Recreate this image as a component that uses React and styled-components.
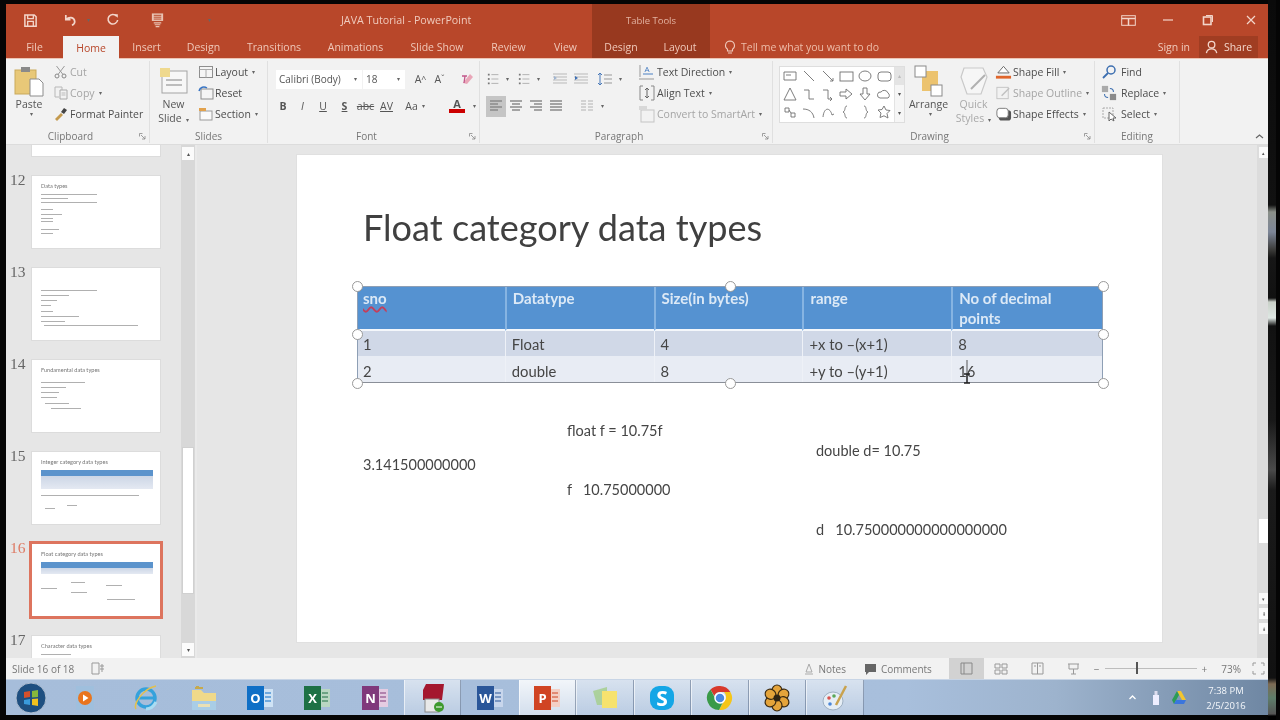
import React from 'react';
import styled, { createGlobalStyle } from 'styled-components';

const Global = createGlobalStyle`
  html, body { margin: 0; padding: 0; background: #000; }
  * { box-sizing: border-box; }
  #root { width: 1280px; height: 720px; overflow: hidden; }
`;

const Screen = styled.div`
  width: 1280px; height: 720px; background: #050505; display: flex;
  padding: 4px 0 5px 6px; font-family: "Open Sans", sans-serif; color: #4a4a4a;
  filter: blur(0.6px);
`;
const Window = styled.div`width: 1262px; display: flex; flex-direction: column;`;
const RightEdge = styled.div`
  width: 12px; margin-top: -4px; margin-bottom: -5px;
  background: linear-gradient(180deg, #0a0a0a 0, #111 205px, #8a8f88 212px, #7d8698 232px, #3a3a38 250px, #161616 258px, #111 298px, #c9d0c8 302px, #dfe8e4 318px, #111 326px, #181818 420px, #4a4a4a 470px, #1a1a1a 490px, #111 678px, #7d6a54 684px, #5e7d6a 698px, #555 714px, #000 716px);
  background-size: 8px 100%; background-repeat: no-repeat;
`;

const TitleBar = styled.div`height: 32px; background: #b8472a; display: flex; align-items: center; color: #f3d6cb; flex: none;`;
const Qat = styled.div`width: 586px; height: 100%; display: flex; align-items: center; padding-left: 15px;`;
const QatItem = styled.span`display: flex; width: ${p => p.$w}px; margin-left: ${p => p.$m || 0}px; justify-content: center; align-items: center;`;
const DocTitle = styled.span`font-size: 10.7px; margin-left: ${p => p.$m}px; white-space: nowrap; color: #f0cbbd;`;
const ContextHead = styled.div`width: 118px; height: 100%; background: #98391f; font-size: 9.5px; display: flex; align-items: center; justify-content: center; color: #e3b3a2;`;
const WinControls = styled.div`margin-left: auto; display: flex; align-items: center; height: 100%;`;
const WinBtn = styled.span`width: 40px; padding-left: ${p => p.$pl || 0}px; display: flex; justify-content: center; align-items: center;`;

const TabBar = styled.div`height: 23px; background: #b8472a; display: flex; align-items: stretch; font-size: 10.5px; color: #f0c9ba; flex: none; border-bottom: 1px solid #edc4b4;`;
const Tab = styled.div`
  width: ${p => p.$w}px; display: flex; justify-content: center; align-items: center;
  ${p => p.$active && 'background: #f2f2f2; color: #b8472a; margin-bottom: -1px;'}
  ${p => p.$ctx && 'background: #98391f;'}
`;
const TellMe = styled.div`display: flex; align-items: center; gap: 5px; margin-left: 14px; color: #eebda9; font-size: 10.5px; white-space: nowrap;`;
const SignIn = styled.div`margin-left: auto; display: flex; align-items: center; padding-right: 10px; gap: 9px; color: #f0cbbd;`;
const ShareBtn = styled.div`width: 59px; height: 22px; background: #a03d22; display: flex; align-items: center; justify-content: center; gap: 4px; color: #f3d6cb;`;

const Ribbon = styled.div`height: 86px; background: #f2f2f2; display: flex; flex: none; padding-top: 2px; border-bottom: 1px solid #dcdcdc;`;
const Group = styled.div`width: ${p => p.$w}px; display: flex; flex-direction: column; border-right: 1px solid #e0e0e0; position: relative; margin-bottom: 1px;`;
const GroupBody = styled.div`height: 65px; display: flex; flex: none;`;
const GroupLabel = styled.div`flex: 1; text-align: center; font-size: 10px; line-height: 15px; color: #777; padding: 3px ${p => p.$pr || 0}px 0 0;`;
const Launcher = styled.span`position: absolute; right: 3px; bottom: 3px; display: flex;`;
const BigBtn = styled.div`
  width: ${p => p.$w}px; display: flex; flex-direction: column; align-items: center; flex: none;
  font-size: 10.5px; line-height: 14px; padding-top: 4px; color: ${p => p.$off ? '#a9a9a9' : '#555'};
`;
const BigIcon = styled.div`height: 32px; display: flex; align-items: center; justify-content: center;`;
const SmallCol = styled.div`display: flex; flex-direction: column; flex: none; margin-left: ${p => p.$m || 0}px;`;
const SmallBtn = styled.div`
  height: 21px; display: flex; align-items: center; font-size: 10.5px; white-space: nowrap;
  color: ${p => p.$off ? '#a5a5a5' : '#4d4d4d'};
`;
const SmallIcon = styled.span`width: ${p => p.$w || 17}px; display: flex; justify-content: center; flex: none; margin-right: ${p => p.$gap ?? 1}px;`;
const Caret = styled.span`font-size: 6px; margin-left: 4px; color: #666; line-height: 1;`;
const Rows = styled.div`display: flex; flex-direction: column; padding-top: 8px; gap: 7px; flex: none;`;
const ToolRow = styled.div`display: flex; height: 20px; align-items: center; margin-left: ${p => p.$m || 0}px;`;
const SelectBox = styled.div`
  width: ${p => p.$w}px; height: 19px; background: #fff; margin-right: 1px; display: flex; align-items: center;
  justify-content: space-between; padding: 0 5px 0 3px; font-size: 10px; color: #555; white-space: nowrap; flex: none;
`;
const ToolBtn = styled.div`
  width: ${p => p.$w || 20}px; height: 21px; margin-left: ${p => p.$m || 0}px; display: flex; align-items: center; justify-content: center; flex: none;
  font-size: 10.5px; font-weight: ${p => p.$b ? 700 : 400}; font-style: ${p => p.$i ? 'italic' : 'normal'};
  text-decoration: ${p => p.$u ? 'underline' : 'none'}; color: #555;
  ${p => p.$on && 'background: #c5c5c5;'}
`;
const Gallery = styled.div`width: 126px; height: 57px; margin: 5px 0 0 6px; background: #fff; border: 1px solid #dedede; display: flex; flex: none;`;
const ShapeGrid = styled.div`flex: 1; display: grid; grid-template-columns: repeat(6, 1fr); grid-auto-rows: 18px; padding-left: 1px;`;
const ShapeCell = styled.span`display: flex; align-items: center; justify-content: center;`;
const GalleryScroll = styled.div`width: 10px; display: flex; flex-direction: column; background: #eee; border-left: 1px solid #e3e3e3;`;
const GalleryArrow = styled.span`flex: 1; display: flex; justify-content: center; align-items: center; font-size: 6px; color: ${p => p.$off ? '#bbb' : '#555'}; background: ${p => p.$off ? '#e4e4e4' : '#f6f6f6'};`;
const Collapse = styled.span`margin-left: auto; align-self: flex-end; margin-right: 4px; margin-bottom: 4px; display: flex;`;

const Main = styled.div`flex: 1; display: flex; background: #e6e6e6; min-height: 0;`;
const Panel = styled.div`width: 191px; display: flex; flex: none; border-right: 2px solid #eaeaea;`;
const ThumbList = styled.div`width: 175px; overflow: hidden;`;
const ThumbStack = styled.div`margin-top: -61px; display: flex; flex-direction: column;`;
const ThumbRow = styled.div`height: 92px; display: flex; flex: none; padding-left: 4px;`;
const ThumbNum = styled.div`width: 22px; font-family: "Liberation Serif", serif; font-size: 15.5px; line-height: 14px; margin-top: -3px; color: ${p => p.$sel ? '#de7a64' : '#666'}; flex: none;`;
const Thumb = styled.div`
  width: 128px; height: 72px; background: #fff; padding: 7px 9px 0; display: flex; flex-direction: column; flex: none; overflow: hidden;
  box-shadow: ${p => p.$sel ? '0 0 0 3px #dd745e' : '0 0 0 1px #dcdcdc'};
`;
const ThumbTitle = styled.div`font-size: 5.6px; line-height: 6px; color: #777; white-space: nowrap; font-family: Lato, sans-serif;`;
const ThumbLine = styled.div`height: 1px; width: ${p => p.$w}px; background: ${p => p.$c || '#b0b0b0'}; margin-top: ${p => p.$t}px; margin-left: ${p => p.$l || 0}px; flex: none;`;
const ThumbTable = styled.div`
  width: 112px; height: ${p => p.$h}px; margin: 5px 0 0 0; flex: none;
  background: linear-gradient(180deg, #5b93cc 0, #5b93cc 6px, #ccd6e6 6px, #e4e9f2 100%);
`;
const MiniRow = styled.div`display: flex; flex: none;`;

const PanelTrack = styled.div`width: 14px; background: #d8d8d8; display: flex; flex-direction: column; padding: 2px 1px; flex: none;`;
const ScrollBtn = styled.div`height: 13px; background: #fbfbfb; display: flex; align-items: center; justify-content: center; font-size: 6px; color: #555; flex: none; margin-top: ${p => p.$push ? 'auto' : '0'};`;
const ScrollThumb = styled.div`height: 147px; background: #fff; margin-top: ${p => p.$t}px; flex: none; border: 1px solid #d0d0d0;`;

const Canvas = styled.div`flex: 1; padding: 10px 0 0 100px; min-width: 0;`;
const Slide = styled.div`width: 865px; height: 487px; background: #fff; position: relative; padding-top: 50px; box-shadow: 0 0 0 1px #e0e0e0; font-family: Lato, sans-serif; color: #444;`;
const SlideTitle = styled.h1`margin: 0 0 0 66px; font-weight: 400; font-size: 36.1px; line-height: 44px; color: #404040; white-space: nowrap;`;
const TableWrap = styled.div`margin: 37px 0 0 60px; width: 746px; position: relative;`;
const DataTable = styled.div`
  display: grid; grid-template-columns: repeat(5, 1fr); grid-template-rows: 44px 25px 26px;
  border: 1px solid #8e9fb5; border-bottom-color: #8a8f98; background: #eef2f8;
`;
const HeadCell = styled.div`
  background: #5592d1; color: #dce9f6; font-weight: 700; font-size: 15px; line-height: 20px;
  padding: 1px 30px 0 ${p => p.$first ? 5 : 6}px; margin-left: ${p => p.$first ? 0 : -2}px;
  border-left: ${p => p.$first ? 'none' : '2px solid #86b4e2'}; border-bottom: 2px solid #f4f7fb;
`;
const BodyCell = styled.div`
  background: ${p => p.$odd ? '#d0d8e7' : '#e8ecf4'}; font-size: 14.8px; line-height: 20px;
  padding: ${p => p.$odd ? 3 : 5}px 6px 0 ${p => p.$first ? 5 : 6}px; margin-left: ${p => p.$first ? 0 : -2}px;
  border-left: ${p => p.$first ? 'none' : '1px solid #eef1f7'}; color: #454545; white-space: nowrap;
`;
const Squiggle = styled.span`text-decoration: underline wavy #c23f5c 1.5px; text-decoration-skip-ink: none; text-underline-offset: 2px;`;
const Handle = styled.span`position: absolute; width: 11px; height: 11px; border-radius: 50%; background: #fff; border: 1.5px solid #999; left: ${p => p.$x}px; top: ${p => p.$y}px; margin: -5.5px 0 0 -5.5px;`;
const Cursor = styled.svg`position: absolute; left: 604px; top: 73px;`;
const Loose = styled.div`position: absolute; left: ${p => p.$x}px; top: ${p => p.$y}px; font-size: 14.5px; line-height: 20px; white-space: pre; color: #454545;`;

const MainScroll = styled.div`width: 11px; background: #dcdcdc; display: flex; flex-direction: column; padding-top: 2px; margin-left: auto; flex: none; align-items: flex-end;`;
const MainBtn = styled.div`width: 9px; height: 11px; background: #fafafa; display: flex; align-items: center; justify-content: center; font-size: 5px; color: #555; flex: none; margin-top: ${p => p.$t || 0}px;`;
const MainThumb = styled.div`width: 9px; height: 24px; background: #fff; margin-top: 361px; flex: none;`;

const StatusBar = styled.div`height: 21px; background: #f2f2f2; display: flex; align-items: center; font-size: 10px; color: #777; flex: none; padding-left: 6px;`;
const StatusRight = styled.div`margin-left: auto; display: flex; align-items: center; height: 100%;`;
const StatusItem = styled.span`display: flex; align-items: center; gap: 4px; margin-left: ${p => p.$m || 0}px; white-space: nowrap;`;
const ViewBtn = styled.span`width: 35px; height: 100%; display: flex; align-items: center; justify-content: center; margin-left: ${p => p.$m || 0}px; ${p => p.$on && 'background: #d2d2d2;'}`;
const ZoomTrack = styled.span`width: 92px; height: 1px; background: #bdbdbd; position: relative; margin: 0 5px; display: block;`;
const ZoomKnob = styled.span`position: absolute; left: 31px; top: -6px; width: 2px; height: 12px; background: #555;`;

const Taskbar = styled.div`height: 36px; display: flex; align-items: stretch; flex: none; background: linear-gradient(90deg, #a6bdda 0, #a8bfdc 900px, #9db3cd 1050px, #6f87a3 1262px); border-top: 1px solid #c8d5e6;`;
const Start = styled.div`width: 49px; display: flex; align-items: center; justify-content: center; flex: none;`;
const TaskIcon = styled.div`
  width: ${p => p.$w || 57.5}px; display: flex; align-items: center; justify-content: center; flex: none;
  ${p => p.$open && `background: linear-gradient(180deg, rgba(255,255,255,.55), rgba(255,255,255,.22)); box-shadow: inset 1px 0 0 rgba(255,255,255,.6), inset -1px 0 0 rgba(60,80,110,.45);`}
  ${p => p.$active && `background: linear-gradient(180deg, rgba(255,255,255,.85), rgba(255,255,255,.5));`}
`;
const Tray = styled.div`margin-left: auto; display: flex; align-items: center; color: #f4f7fb; flex: none; padding-right: 11px;`;
const TrayIcon = styled.span`display: flex; width: 23px; justify-content: center;`;
const Clock = styled.div`font-size: 9.5px; line-height: 15px; text-align: center; width: 62px; margin-left: 5px;`;

const S = ({ w = 16, h = 16, v = '0 0 16 16', children }) => <svg width={w} height={h} viewBox={v} fill="none">{children}</svg>;

const SaveIco = () => <S w={15} h={15}><path d="M2 2h10l2 2v10H2z" stroke="#f3d6cb" strokeWidth="1.6" /><path d="M5 2v4h6V2M5 14V9h6v5" stroke="#f3d6cb" strokeWidth="1.4" /></S>;
const UndoIco = () => <S w={15} h={15}><path d="M3 2v5h5M3.5 7C6 4 12 4 12.5 9c.2 2-1.5 3.5-3 4" stroke="#f3d6cb" strokeWidth="1.8" /></S>;
const RedoIco = () => <S w={14} h={14}><path d="M12 3.5A5.5 5.5 0 1 0 13.3 8" stroke="#f3d6cb" strokeWidth="1.8" /><path d="M8.5 1.5h5v4z" fill="#f3d6cb" /></S>;
const PreviewIco = () => <S w={15} h={16}><rect x="2" y="1" width="12" height="8" fill="#e9c4b4" /><path d="M4 3h8M4 5h8M4 7h8" stroke="#b8472a" /><path d="M4 11h8M5 13h6M6 15h4" stroke="#e9c4b4" strokeWidth="1.2" /></S>;
const RibbonOpt = () => <S w={15} h={11} v="0 0 15 11"><rect x=".7" y=".7" width="13.6" height="9.6" stroke="#f3d6cb" /><path d="M.7 3.5h13.6M7.5 3.5v7" stroke="#f3d6cb" strokeWidth="1.5" /></S>;
const BulbIco = () => <S w={12} h={15} v="0 0 12 15"><path d="M6 1a4.5 4.5 0 0 0-2.5 8.2V11h5V9.2A4.5 4.5 0 0 0 6 1zM4 13h4" stroke="#f0cbbd" strokeWidth="1.1" /></S>;
const PersonIco = () => <S w={15} h={15}><circle cx="7" cy="5" r="3.5" stroke="#f3d6cb" strokeWidth="1.4" /><path d="M1.5 14c.5-3.5 3-4.5 5.500-4.500s5 1 5.500 4.500" stroke="#f3d6cb" strokeWidth="1.4" /></S>;

const PasteIco = () => <S w={30} h={32} v="0 0 30 32"><rect x="1" y="5" width="21" height="24" fill="#e8c878" stroke="#c9a95a" /><rect x="7" y="2" width="9" height="5" fill="#8a8a8a" /><path d="M16 14h9l4 4v13H16z" fill="#fff" stroke="#8c8c8c" /></S>;
const CutIco = () => <S><circle cx="4" cy="12" r="2" stroke="#888" /><circle cx="11" cy="12" r="2" stroke="#888" /><path d="M5 10.5 11.5 2M10 10.5 3.5 2" stroke="#9a9a9a" /></S>;
const CopyIco = () => <S><path d="M2 2h7v3M2 2v10h4" stroke="#b8b8b8" /><path d="M7 5h7v9H7z" stroke="#aaa" /><path d="M8.5 8h4M8.5 10h4" stroke="#bbb" /></S>;
const PainterIco = () => <S><path d="M2 13 8 7l2 2-6 6z" fill="#c49a4e" /><path d="M8 6l3-4 3 2-3 4z" fill="#444" /></S>;
const NewSlideIco = () => <S w={30} h={28} v="0 0 30 28"><rect x="3" y="4" width="25" height="22" fill="#f7f7f7" stroke="#a3a3a3" /><rect x="1" y="1" width="10" height="9" fill="#efd98e" /><path d="M7 13h16M7 18h16" stroke="#aaa" strokeWidth="1.5" /></S>;
const LayoutIco = () => <S><rect x="1.5" y="2.5" width="13" height="11" fill="#f5f5f5" stroke="#8e8e8e" /><path d="M1.5 5.5h13M8 5.5v8" stroke="#aaa" /></S>;
const ResetIco = () => <S><rect x="3" y="4" width="12" height="10" fill="#f5f5f5" stroke="#8e8e8e" /><path d="M1 6c1-4 5-5 8-3" stroke="#3874c4" strokeWidth="1.5" /></S>;
const SectionIco = () => <S><rect x="2" y="5" width="12" height="9" fill="#fafafa" stroke="#9a9a9a" /><rect x="1" y="2" width="7" height="3" fill="#e2a24d" /></S>;
const ClearIco = () => <S><path d="M4 12 11 3l3 3-6 7z" fill="#e9a6b8" /><path d="M3 5h5M6 5 5 12" stroke="#c2578a" strokeWidth="1.3" /></S>;
const AColorIco = () => <S w={18} h={18} v="0 0 18 18"><text x="9" y="11" textAnchor="middle" fontSize="11" fontFamily="Open Sans" fill="#555" fontWeight="700">A</text><rect x="1" y="12" width="16" height="4" fill="#c00" /></S>;
const Launch = () => <S w={7} h={7} v="0 0 7 7"><path d="M.5.5h3M.5.5v3M2 2l4 4M6 3v3H3" stroke="#888" strokeWidth=".8" /></S>;

const listLines = (x, y) => [0, 1, 2].map(i => <g key={i}><rect x={x} y={y + i * 5} width="2" height="2" fill="#777" /><path d={`M${x + 4} ${y + i * 5 + 1}h8`} stroke="#aaa" /></g>);
const Bullets = () => <S w={14} h={16}>{listLines(1, 2)}</S>;
const Outdent = ({ blue }) => <S><path d="M1 3h14M1 6h14M1 9h14M1 12h14" stroke="#b9b9b9" /><path d="M2 5v4l3-2z" fill={blue ? '#3c6fb4' : '#9fb4d0'} /></S>;
const LineSp = () => <S><path d="M3 2v12M1 4l2-2 2 2M1 12l2 2 2-2" stroke="#4878b8" /><path d="M7 4h8M7 8h8M7 12h8" stroke="#999" /></S>;
const Align = ({ kind }) => {
  const p = { l: 'M2 3h12M2 6h8M2 9h12M2 12h8', c: 'M2 3h12M4 6h8M2 9h12M4 12h8', r: 'M2 3h12M6 6h8M2 9h12M6 12h8', j: 'M2 3h12M2 6h12M2 9h12M2 12h12', k: 'M2 3h5M9 3h5M2 6h5M9 6h5M2 9h5M9 9h5M2 12h5M9 12h5' }[kind];
  return <S><path d={p} stroke={kind === 'k' ? '#c8c8c8' : '#8a8a8a'} strokeWidth="1.4" /></S>;
};
const TextDirIco = () => <S w={18} h={18} v="0 0 18 18"><path d="M1 16h15M2 14V2" stroke="#999" /><text x="9" y="9" fontSize="8" fill="#3f78bf" textAnchor="middle">A</text><path d="M5 11h10" stroke="#4a80c4" /></S>;
const AlignTextIco = () => <S w={18} h={18} v="0 0 18 18"><path d="M5 2H2v14h3M13 2h3v14h-3" stroke="#888" /><path d="M9 4v10M7 6l2-2 2 2M7 12l2 2 2-2" stroke="#666" /></S>;
const SmartIco = () => <S w={18} h={18} v="0 0 18 18"><rect x="3" y="5" width="13" height="12" stroke="#c4c4c4" /><rect x="1" y="1" width="8" height="4" fill="#d8d8d8" /></S>;
const ArrangeIco = () => <S w={32} h={32} v="0 0 32 32"><rect x="9" y="6" width="16" height="20" fill="#ecc36f" /><rect x="2" y="1" width="11" height="11" fill="#fff" stroke="#8a8a8a" /><rect x="18" y="20" width="11" height="11" fill="#fff" stroke="#8a8a8a" /></S>;
const QuickIco = () => <S w={32} h={32} v="0 0 32 32"><path d="M6 3h19l4 9-6 17H9L3 12z" fill="#f6f6f6" stroke="#c9c9c9" strokeWidth="1.2" /><path d="M13 24 27 10" stroke="#b0b0b0" strokeWidth="2" /></S>;
const FillIco = () => <S w={18} h={18} v="0 0 18 18"><path d="M3 10 9 3l6 7z" fill="#fff" stroke="#666" /><rect x="1" y="13" width="16" height="3" fill="#e0662c" /></S>;
const OutlineIco = () => <S w={18} h={18} v="0 0 18 18"><rect x="2" y="3" width="12" height="12" stroke="#c4c4c4" /><path d="M7 12 15 4" stroke="#c0c0c0" strokeWidth="1.5" /></S>;
const EffectsIco = () => <S w={18} h={18} v="0 0 18 18"><rect x="4" y="5" width="13" height="11" rx="3" fill="#555" /><rect x="2" y="3" width="12" height="10" rx="3" fill="#fff" stroke="#777" /></S>;
const FindIco = () => <S><circle cx="10" cy="6" r="4" stroke="#3d6fb0" strokeWidth="1.5" /><path d="M7 9 2 14" stroke="#3d6fb0" strokeWidth="1.8" /></S>;
const ReplaceIco = () => <S w={18} h={18} v="0 0 18 18"><rect x="1" y="1" width="7" height="7" fill="#aaa" /><rect x="10" y="10" width="7" height="7" fill="#8a8a8a" /><path d="M10 4c3 0 4 1 4 4M8 14c-3 0-4-1-4-4" stroke="#3d6fb0" strokeWidth="1.2" /></S>;
const SelectIco = () => <S><rect x="2" y="2" width="10" height="10" stroke="#aaa" strokeDasharray="2 1" /><path d="M8 6v9l2-2 3 2-1-3h3z" fill="#fff" stroke="#666" /></S>;

const shapes = [
  <path d="M1 3h12v8H1z M3 6h5" />, <path d="M2 2l10 10" />, <path d="M2 2l10 10M9 12h3V9" />, <rect x="1" y="3" width="13" height="9" />, <ellipse cx="7" cy="7" rx="6" ry="5" />, <rect x="1" y="3" width="13" height="9" rx="3" />,
  <path d="M7 1 13 13H1z" />, <path d="M2 3h5v9h5" />, <path d="M2 3h5v9h4M9 10l2 2-2 2" />, <path d="M1 5h6V2l6 5-6 5V9H1z" />, <path d="M5 1h4v6h3l-5 6-5-6h3z" />, <path d="M3 11a3 3 0 0 1 1-6 4 4 0 0 1 7 1 3 3 0 0 1 0 5z" />,
  <path d="M2 3h4v4H2zM8 8h4v4H8zM6 5l2 3" />, <path d="M1 4c6 0 10 3 11 9" />, <path d="M2 12C3 2 9 2 11 10l2-1" />, <path d="M8 1C5 1 7 6 4 7c3 1 1 6 4 6" />, <path d="M6 1c3 0 1 5 4 6-3 1-1 6-4 6" />, <path d="M7 1l2 4 4 .5-3 3 1 4.5-4-2.200L3 12.500l1-4.500-3-3 4-.5z" />,
];

const slideStack = [
  { n: 11, lines: [] },
  { n: 12, title: 'Data types', lines: [[56, 5], [27, 3], [56, 3], [12, 6], [21, 4], [12, 3], [12, 2], [18, 7], [12, 3]] },
  { n: 13, title: '', lines: [[56, 15], [28, 4], [16, 4], [10, 4], [12, 5], [38, 4], [24, 4], [94, 3, 3]] },
  { n: 14, title: 'Fundamental data types', lines: [[44, 9], [25, 4], [18, 4], [16, 4], [24, 5, 4], [30, 4, 10]] },
];

function MiniSlide({ item }) {
  return (
    <Thumb>
      {item.title ? <ThumbTitle>{item.title}</ThumbTitle> : null}
      {item.lines.map((l, i) => <ThumbLine key={i} $w={l[0]} $t={l[1]} $l={l[2]} />)}
    </Thumb>
  );
}

const officeBox = (bg, letter, lite) => (
  <S w={30} h={28} v="0 0 30 28">
    <rect x="14" y="5" width="14" height="18" fill={lite} />
    <path d="M20 9h6M20 13h6M20 17h6" stroke={bg} strokeWidth="1" />
    <rect x="2" y="2" width="17" height="24" fill={bg} />
    <text x="10.5" y="19" textAnchor="middle" fontSize="13" fontWeight="700" fontFamily="Open Sans" fill="#fff">{letter}</text>
  </S>
);

const header = ['sno', 'Datatype', 'Size(in bytes)', 'range', 'No of decimal points'];
const row1 = ['1', 'Float', '4', '+x to –(x+1)', '8'];
const row2 = ['2', 'double', '8', '+y to –(y+1)', '16'];
const handles = [[0, 0], [373, 0], [746, 0], [0, 48], [746, 48], [0, 97], [373, 97], [746, 97]];

export default function App() {
  return (
    <Screen>
      <Global />
      <Window>
        <TitleBar>
          <Qat>
            <QatItem $w={18}><SaveIco /></QatItem>
            <QatItem $w={18} $m={22}><UndoIco /></QatItem>
            <QatItem $w={8} $m={3}><Caret>▾</Caret></QatItem>
            <QatItem $w={16} $m={15}><RedoIco /></QatItem>
            <QatItem $w={16} $m={28}><PreviewIco /></QatItem>
            <QatItem $w={8} $m={38}><Caret>▾</Caret></QatItem>
            <DocTitle $m={130}>JAVA Tutorial - PowerPoint</DocTitle>
          </Qat>
          <ContextHead>Table Tools</ContextHead>
          <WinControls>
            <WinBtn><RibbonOpt /></WinBtn>
            <WinBtn><S w={12} h={12} v="0 0 12 12"><path d="M1 6h10" stroke="#f3d6cb" strokeWidth="1.2" /></S></WinBtn>
            <WinBtn><S w={12} h={12} v="0 0 12 12"><rect x="1.5" y="3" width="7.5" height="7.5" stroke="#f3d6cb" strokeWidth="1.6" /><path d="M4 1.5h6.5V8" stroke="#f3d6cb" /></S></WinBtn>
            <WinBtn $pl={6}><S w={12} h={12} v="0 0 12 12"><path d="M2 2l8 8M10 2l-8 8" stroke="#f3d6cb" strokeWidth="1.2" /></S></WinBtn>
          </WinControls>
        </TitleBar>
        <TabBar>
          <Tab $w={57}>File</Tab>
          <Tab $w={56} $active>Home</Tab>
          <Tab $w={55}>Insert</Tab>
          <Tab $w={59}>Design</Tab>
          <Tab $w={82}>Transitions</Tab>
          <Tab $w={81}>Animations</Tab>
          <Tab $w={82}>Slide Show</Tab>
          <Tab $w={61}>Review</Tab>
          <Tab $w={53}>View</Tab>
          <Tab $w={58} $ctx>Design</Tab>
          <Tab $w={60} $ctx>Layout</Tab>
          <TellMe><BulbIco />Tell me what you want to do</TellMe>
          <SignIn>Sign in<ShareBtn><PersonIco />Share</ShareBtn></SignIn>
        </TabBar>
        <Ribbon>
          <Group $w={144}>
            <GroupBody>
              <BigBtn $w={46}><BigIcon><PasteIco /></BigIcon>Paste<Caret>▾</Caret></BigBtn>
              <SmallCol>
                <SmallBtn $off><SmallIcon><CutIco /></SmallIcon>Cut</SmallBtn>
                <SmallBtn $off><SmallIcon><CopyIco /></SmallIcon>Copy<Caret>▾</Caret></SmallBtn>
                <SmallBtn><SmallIcon><PainterIco /></SmallIcon>Format Painter</SmallBtn>
              </SmallCol>
            </GroupBody>
            <GroupLabel $pr={14}>Clipboard</GroupLabel>
            <Launcher><Launch /></Launcher>
          </Group>
          <Group $w={118}>
            <GroupBody>
              <BigBtn $w={47}><BigIcon><NewSlideIco /></BigIcon>New<span>Slide<Caret>▾</Caret></span></BigBtn>
              <SmallCol>
                <SmallBtn><SmallIcon><LayoutIco /></SmallIcon>Layout<Caret>▾</Caret></SmallBtn>
                <SmallBtn><SmallIcon><ResetIco /></SmallIcon>Reset</SmallBtn>
                <SmallBtn><SmallIcon><SectionIco /></SmallIcon>Section<Caret>▾</Caret></SmallBtn>
              </SmallCol>
            </GroupBody>
            <GroupLabel>Slides</GroupLabel>
          </Group>
          <Group $w={212}>
            <GroupBody>
              <Rows>
                <ToolRow $m={8}>
                  <SelectBox $w={86}>Calibri (Body)<Caret>▾</Caret></SelectBox>
                  <SelectBox $w={42}>18<Caret>▾</Caret></SelectBox>
                  <ToolBtn $w={19} $m={5}>A<sup>^</sup></ToolBtn>
                  <ToolBtn $w={19}>A<sub>ˇ</sub></ToolBtn>
                  <ToolBtn $w={20} $m={8}><ClearIco /></ToolBtn>
                </ToolRow>
                <ToolRow $m={5}>
                  <ToolBtn $b>B</ToolBtn>
                  <ToolBtn $w={19} $i>I</ToolBtn>
                  <ToolBtn $w={22} $u>U</ToolBtn>
                  <ToolBtn $w={21} $u $b>S</ToolBtn>
                  <ToolBtn $w={21}><s>abc</s></ToolBtn>
                  <ToolBtn $w={21}><u>AV</u></ToolBtn>
                  <ToolBtn $w={36}>Aa<Caret>▾</Caret></ToolBtn>
                  <ToolBtn $w={24} $m={12}><AColorIco /></ToolBtn>
                  <Caret>▾</Caret>
                </ToolRow>
              </Rows>
            </GroupBody>
            <GroupLabel $pr={14}>Font</GroupLabel>
            <Launcher><Launch /></Launcher>
          </Group>
          <Group $w={293}>
            <GroupBody>
              <Rows>
                <ToolRow $m={6}>
                  <ToolBtn $w={16}><Bullets /></ToolBtn><Caret>▾</Caret>
                  <ToolBtn $w={16} $m={8}><Bullets /></ToolBtn><Caret>▾</Caret>
                  <ToolBtn $w={20} $m={10}><Outdent /></ToolBtn>
                  <ToolBtn $w={20} $m={1}><Outdent blue /></ToolBtn>
                  <ToolBtn $w={20} $m={4}><LineSp /></ToolBtn><Caret>▾</Caret>
                </ToolRow>
                <ToolRow $m={6}>
                  <ToolBtn $on><Align kind="l" /></ToolBtn>
                  <ToolBtn><Align kind="c" /></ToolBtn>
                  <ToolBtn><Align kind="r" /></ToolBtn>
                  <ToolBtn><Align kind="j" /></ToolBtn>
                  <ToolBtn $m={11}><Align kind="k" /></ToolBtn><Caret>▾</Caret>
                </ToolRow>
              </Rows>
              <SmallCol $m={16}>
                <SmallBtn><SmallIcon $w={18}><TextDirIco /></SmallIcon>Text Direction<Caret>▾</Caret></SmallBtn>
                <SmallBtn><SmallIcon $w={18}><AlignTextIco /></SmallIcon>Align Text<Caret>▾</Caret></SmallBtn>
                <SmallBtn $off><SmallIcon $w={18}><SmartIco /></SmallIcon>Convert to SmartArt<Caret>▾</Caret></SmallBtn>
              </SmallCol>
            </GroupBody>
            <GroupLabel $pr={14}>Paragraph</GroupLabel>
            <Launcher><Launch /></Launcher>
          </Group>
          <Group $w={322}>
            <GroupBody>
              <Gallery>
                <ShapeGrid>
                  {shapes.map((s, i) => <ShapeCell key={i}><svg width="15" height="15" viewBox="0 0 15 15" fill="none" stroke="#6f6f6f" strokeWidth=".9">{s}</svg></ShapeCell>)}
                </ShapeGrid>
                <GalleryScroll><GalleryArrow $off>▴</GalleryArrow><GalleryArrow>▾</GalleryArrow><GalleryArrow>▾</GalleryArrow></GalleryScroll>
              </Gallery>
              <BigBtn $w={47}><BigIcon><ArrangeIco /></BigIcon>Arrange<Caret>▾</Caret></BigBtn>
              <BigBtn $w={43} $off><BigIcon><QuickIco /></BigIcon>Quick<span>Styles<Caret>▾</Caret></span></BigBtn>
              <SmallCol>
                <SmallBtn><SmallIcon><FillIco /></SmallIcon>Shape Fill<Caret>▾</Caret></SmallBtn>
                <SmallBtn $off><SmallIcon><OutlineIco /></SmallIcon>Shape Outline<Caret>▾</Caret></SmallBtn>
                <SmallBtn><SmallIcon><EffectsIco /></SmallIcon>Shape Effects<Caret>▾</Caret></SmallBtn>
              </SmallCol>
            </GroupBody>
            <GroupLabel $pr={8}>Drawing</GroupLabel>
            <Launcher><Launch /></Launcher>
          </Group>
          <Group $w={85}>
            <GroupBody>
              <SmallCol $m={6}>
                <SmallBtn><SmallIcon $w={16} $gap={4}><FindIco /></SmallIcon>Find</SmallBtn>
                <SmallBtn><SmallIcon $w={16} $gap={4}><ReplaceIco /></SmallIcon>Replace<Caret>▾</Caret></SmallBtn>
                <SmallBtn><SmallIcon $w={16} $gap={4}><SelectIco /></SmallIcon>Select<Caret>▾</Caret></SmallBtn>
              </SmallCol>
            </GroupBody>
            <GroupLabel>Editing</GroupLabel>
          </Group>
          <Collapse><S w={9} h={7} v="0 0 9 7"><path d="M1 5l3.5-3L8 5" stroke="#666" strokeWidth="1.2" /></S></Collapse>
        </Ribbon>
        <Main>
          <Panel>
            <ThumbList>
              <ThumbStack>
                {slideStack.map(s => (
                  <ThumbRow key={s.n}>
                    <ThumbNum>{s.n === 11 ? '' : s.n}</ThumbNum>
                    <MiniSlide item={s} />
                  </ThumbRow>
                ))}
                <ThumbRow>
                  <ThumbNum>15</ThumbNum>
                  <Thumb>
                    <ThumbTitle>Integer category data types</ThumbTitle>
                    <ThumbTable $h={19} />
                    <ThumbLine $w={98} $t={6} />
                    <MiniRow><ThumbLine $w={10} $t={12} $l={4} /><ThumbLine $w={10} $t={9} $l={12} /></MiniRow>
                  </Thumb>
                </ThumbRow>
                <ThumbRow>
                  <ThumbNum $sel>16</ThumbNum>
                  <Thumb $sel>
                    <ThumbTitle>Float category data types</ThumbTitle>
                    <ThumbTable $h={12} />
                    <MiniRow>
                      <ThumbLine $w={16} $t={14} />
                      <ThumbLine $w={14} $t={8} $l={14} />
                      <ThumbLine $w={16} $t={11} $l={21} />
                    </MiniRow>
                    <MiniRow>
                      <ThumbLine $w={16} $t={3} $l={30} />
                      <ThumbLine $w={28} $t={10} $l={20} />
                    </MiniRow>
                  </Thumb>
                </ThumbRow>
                <ThumbRow>
                  <ThumbNum>17</ThumbNum>
                  <Thumb><ThumbTitle>Character data types</ThumbTitle><ThumbLine $w={30} $t={5} /></Thumb>
                </ThumbRow>
              </ThumbStack>
            </ThumbList>
            <PanelTrack>
              <ScrollBtn>▴</ScrollBtn>
              <ScrollThumb $t={287} />
              <ScrollBtn $push>▾</ScrollBtn>
            </PanelTrack>
          </Panel>
          <Canvas>
            <Slide>
              <SlideTitle>Float category data types</SlideTitle>
              <TableWrap>
                <DataTable>
                  {header.map((h, i) => <HeadCell key={h} $first={i === 0}>{i === 0 ? <Squiggle>{h}</Squiggle> : h}</HeadCell>)}
                  {row1.map((c, i) => <BodyCell key={i} $odd $first={i === 0}>{c}</BodyCell>)}
                  {row2.map((c, i) => <BodyCell key={i} $first={i === 0}>{c}</BodyCell>)}
                </DataTable>
                {handles.map(([x, y], i) => <Handle key={i} $x={x} $y={y} />)}
                <Cursor width="12" height="26" viewBox="0 0 12 26" fill="none"><path d="M6 1v14" stroke="#555" /><path d="M3 15h6M6 15v9M3 24h6" stroke="#222" strokeWidth="1.5" /></Cursor>
              </TableWrap>
              <Loose $x={270} $y={266}>float f = 10.75f</Loose>
              <Loose $x={66} $y={300}>3.141500000000</Loose>
              <Loose $x={270} $y={325}>f   10.75000000</Loose>
              <Loose $x={519} $y={286}>double d= 10.75</Loose>
              <Loose $x={519} $y={365}>d   10.750000000000000000</Loose>
            </Slide>
          </Canvas>
          <MainScroll>
            <MainBtn>▴</MainBtn>
            <MainThumb />
            <MainBtn $t={50}>▾</MainBtn>
            <MainBtn $t={4}>⇞</MainBtn>
            <MainBtn $t={4}>⇟</MainBtn>
          </MainScroll>
        </Main>
        <StatusBar>
          Slide 16 of 18
          <StatusItem $m={17}><S w={14} h={13} v="0 0 14 13"><path d="M1 1h7v11H1zM9 4h4M9 7h4M11 2v8" stroke="#999" /></S></StatusItem>
          <StatusRight>
            <StatusItem><S w={10} h={12} v="0 0 10 12"><path d="M5 1 2 9h6zM1 11h8" stroke="#aaa" /></S>Notes</StatusItem>
            <StatusItem $m={18}><S w={13} h={12} v="0 0 13 12"><path d="M1 1h11v8H5l-3 3V9H1z" fill="#666" /></S>Comments</StatusItem>
            <ViewBtn $on $m={17}><S w={13} h={13} v="0 0 13 13"><path d="M1 1h11v11H1zM4 1v11" stroke="#888" /></S></ViewBtn>
            <ViewBtn><S w={14} h={12} v="0 0 14 12"><path d="M1 1h5v4H1zM8 1h5v4H8zM1 7h5v4H1zM8 7h5v4H8z" stroke="#999" /></S></ViewBtn>
            <ViewBtn $m={1}><S w={13} h={13} v="0 0 13 13"><path d="M1 1h11v11H1zM6.5 1v11M3 4h2M8 4h2" stroke="#999" /></S></ViewBtn>
            <ViewBtn $m={1}><S w={13} h={13} v="0 0 13 13"><path d="M1 2h11M2 2v5h9V2M6.5 7v5M4 12h5" stroke="#999" /></S></ViewBtn>
            <StatusItem $m={3}>−</StatusItem>
            <ZoomTrack><ZoomKnob /></ZoomTrack>
            <StatusItem>+</StatusItem>
            <StatusItem $m={14}>73%</StatusItem>
            <StatusItem $m={11}><S w={13} h={13} v="0 0 13 13"><path d="M1 4V1h3M9 1h3v3M12 9v3H9M4 12H1V9" stroke="#999" /></S></StatusItem>
            <StatusItem $m={3} />
          </StatusRight>
        </StatusBar>
        <Taskbar>
          <Start>
            <S w={32} h={32} v="0 0 32 32">
              <circle cx="16" cy="16" r="15" fill="#1e4f80" stroke="#aebdd0" />
              <path d="M9 10l6-1v6l-6 1z" fill="#d5502c" /><path d="M17 9l6-1v7l-6 .5z" fill="#86b93b" />
              <path d="M9 18l6-1v6l-6-1z" fill="#3a9bdc" /><path d="M17 17l6-.5V24l-6-1z" fill="#f1c11f" />
            </S>
          </Start>
          <TaskIcon $w={60}>
            <S w={20} h={26} v="0 0 20 26"><rect x="1" y="1" width="18" height="24" fill="#9fbfdd" /><circle cx="10" cy="13" r="7" fill="#e9751e" /><path d="M8 9.5v7l5.500-3.500z" fill="#fff" /></S>
          </TaskIcon>
          <TaskIcon $w={62}>
            <S w={28} h={30} v="0 0 28 30"><circle cx="14" cy="15" r="9" stroke="#35a2dc" strokeWidth="3.5" /><path d="M6 15h16" stroke="#35a2dc" strokeWidth="3" /><path d="M24 19c-3 6-8 7-10 7" stroke="#a9dcf2" strokeWidth="3" /><path d="M4 26C1 22 10 6 24 3" stroke="#e2c04f" strokeWidth="1.5" /></S>
          </TaskIcon>
          <TaskIcon $w={54}>
            <S w={28} h={28} v="0 0 28 28"><path d="M2 6h9l3 3h12v17H2z" fill="#f0d98a" /><path d="M5 4h8M6 3h3" stroke="#c6a94c" strokeWidth="2" /><rect x="2" y="17" width="24" height="9" fill="#a9cde6" /><rect x="8" y="20" width="12" height="3" fill="#e9e0b5" /></S>
          </TaskIcon>
          <TaskIcon>{officeBox('#0f6fc6', 'O', '#cfe3f5')}</TaskIcon>
          <TaskIcon>{officeBox('#1e7145', 'X', '#b9d7c3')}</TaskIcon>
          <TaskIcon>{officeBox('#80397b', 'N', '#e4cce2')}</TaskIcon>
          <TaskIcon $open>
            <S w={28} h={32} v="0 0 28 32"><path d="M5 8 8 2h18l-2 16H5z" fill="#a4172e" /><rect x="7" y="17" width="14" height="13" fill="#e9e9e9" stroke="#888" /><circle cx="21" cy="25" r="5" fill="#3f9a2e" /><path d="M18 25h6" stroke="#fff" /></S>
          </TaskIcon>
          <TaskIcon>{officeBox('#2a5699', 'W', '#c8d6ec')}</TaskIcon>
          <TaskIcon $open $active>{officeBox('#d04423', 'P', '#f3cfc5')}</TaskIcon>
          <TaskIcon $open>
            <S w={28} h={26} v="0 0 28 26"><path d="M2 6l14-4v18H6z" fill="#a6cf8f" opacity=".85" /><rect x="11" y="6" width="15" height="17" fill="#f6e26e" /></S>
          </TaskIcon>
          <TaskIcon $open>
            <S w={28} h={28} v="0 0 28 28"><rect x="2" y="2" width="24" height="24" rx="9" fill="#14a6e6" /><text x="14" y="22" textAnchor="middle" fontSize="21" fontWeight="700" fontFamily="Open Sans" fill="#fff">S</text></S>
          </TaskIcon>
          <TaskIcon $open>
            <S w={28} h={28} v="0 0 28 28">
              <path d="M14 2a12 12 0 0 1 10.4 6H14a6 6 0 0 0-5.7 4L4.5 5.5A12 12 0 0 1 14 2z" fill="#d8392b" />
              <path d="M24.4 8A12 12 0 0 1 13 26l5-9a6 6 0 0 0 0-9z" fill="#f5c518" />
              <path d="M13 26A12 12 0 0 1 4.5 5.5L9 14a6 6 0 0 0 7.5 5z" fill="#3a9a48" />
              <circle cx="14" cy="14" r="5" fill="#4a87e0" stroke="#fff" strokeWidth="1.5" />
            </S>
          </TaskIcon>
          <TaskIcon $open>
            <S w={28} h={28} v="0 0 28 28">
              {[0, 60, 120, 180, 240, 300].map(a => <ellipse key={a} cx="14" cy="6.5" rx="5" ry="5.5" fill="#e5a43a" stroke="#3a2a12" strokeWidth="1.2" transform={`rotate(${a} 14 14)`} />)}
              <circle cx="14" cy="14" r="3.5" fill="#2f2413" />
            </S>
          </TaskIcon>
          <TaskIcon $open>
            <S w={28} h={30} v="0 0 28 30"><ellipse cx="12" cy="18" rx="10" ry="9" fill="#e6eef5" stroke="#9fb0c2" /><circle cx="8" cy="15" r="1.8" fill="#d9534f" /><circle cx="13" cy="13" r="1.8" fill="#5aa85a" /><circle cx="9" cy="21" r="1.8" fill="#4a86d8" /><path d="M15 22 25 3" stroke="#c9a24e" strokeWidth="2.5" /></S>
          </TaskIcon>
          <Tray>
            <TrayIcon><S w={9} h={7} v="0 0 9 7"><path d="M1.5 5 4.5 2l3 3" stroke="#fff" strokeWidth="1.3" /></S></TrayIcon>
            <TrayIcon><S w={10} h={16} v="0 0 10 16"><rect x="2" y="5" width="6" height="10" fill="#eef" /><rect x="3.5" y="1" width="3" height="4" fill="#dde" /></S></TrayIcon>
            <TrayIcon><S w={16} h={15} v="0 0 16 15"><path d="M6 1h4l5 9H11z" fill="#f2c52e" /><path d="M6 1 1 10l2 4 5-9z" fill="#2c9c55" /><path d="M3 14h10l2-4H5z" fill="#3b76dd" /></S></TrayIcon>
            <Clock>7:38 PM<br />2/5/2016</Clock>
          </Tray>
        </Taskbar>
      </Window>
      <RightEdge />
    </Screen>
  );
}
